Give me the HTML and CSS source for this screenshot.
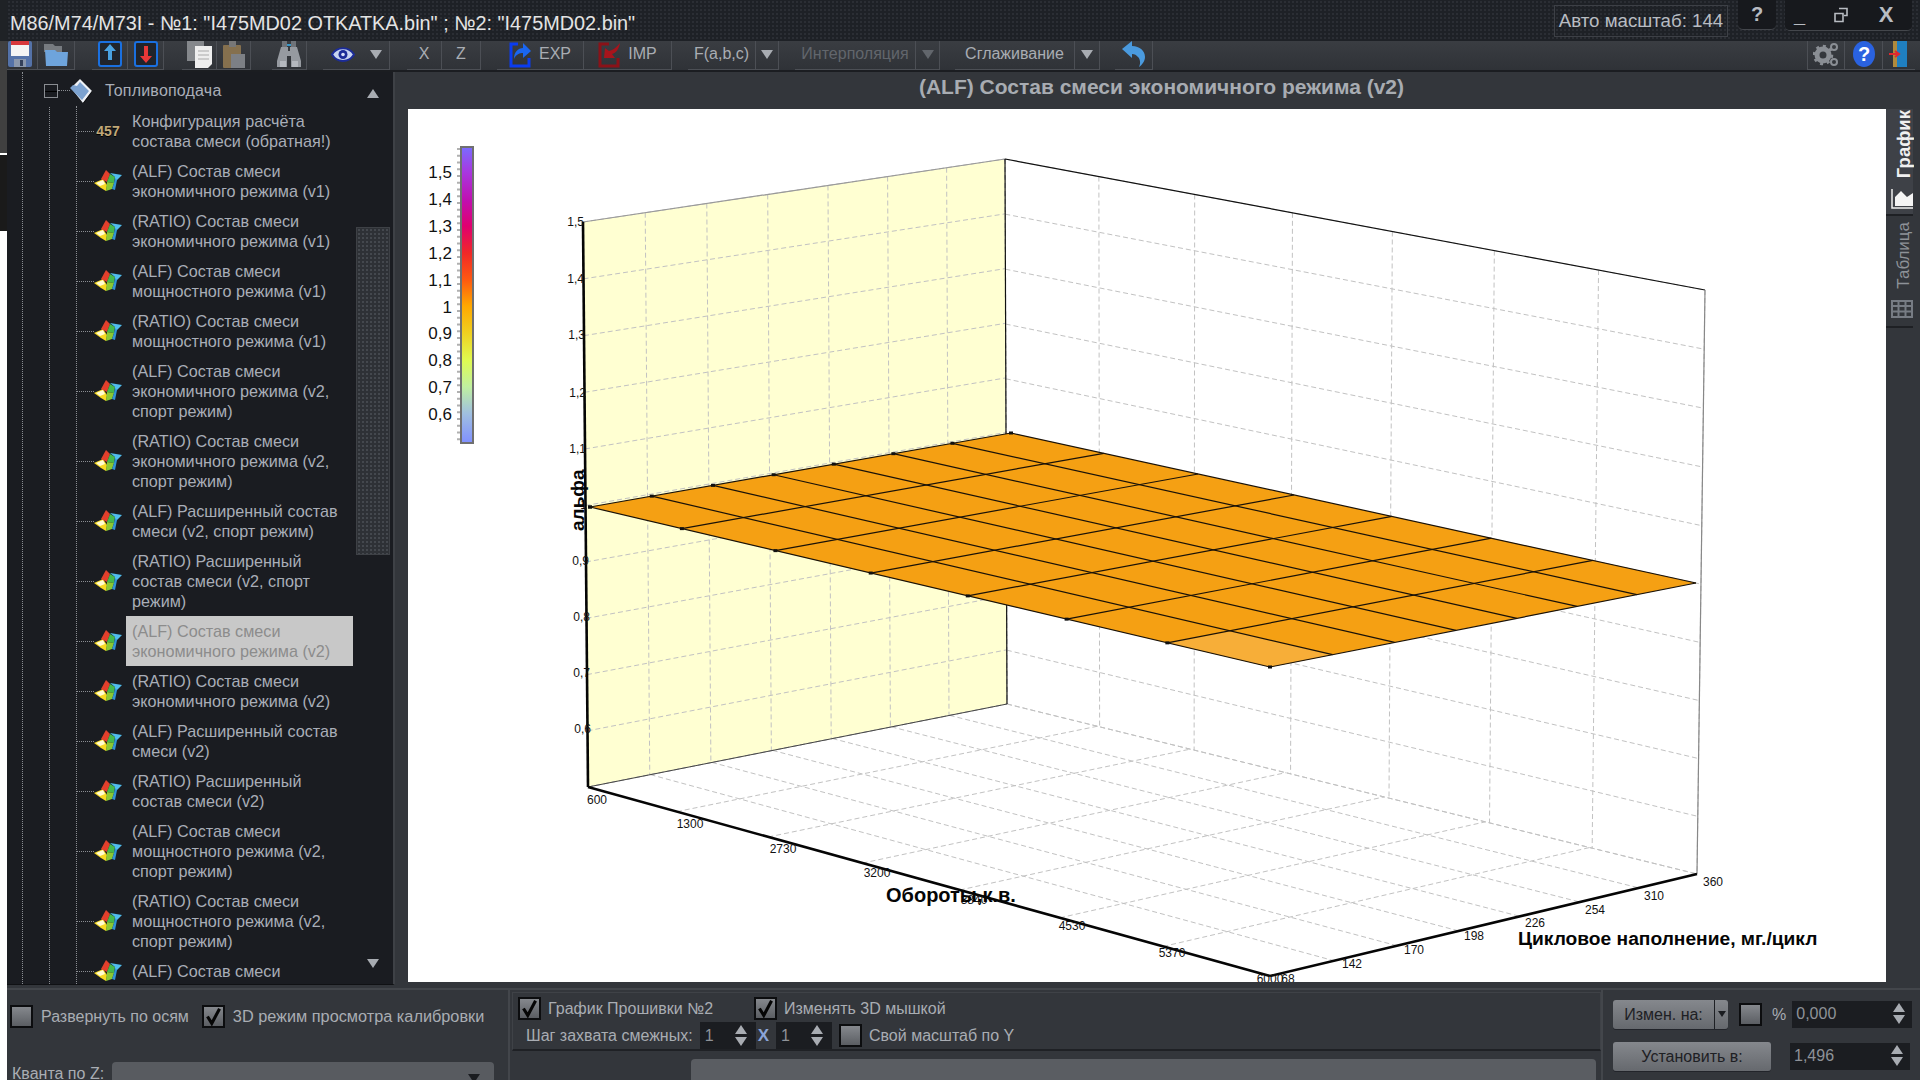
FILE: index.html
```html
<!DOCTYPE html>
<html lang="ru">
<head>
    <meta charset="UTF-8">
    <title>M86/M74/M73I</title>
    <link rel="stylesheet" href="styles.css">
</head>
<body>
    <svg class="defs" width="0" height="0">
        <symbol id="ic-map" viewBox="0 0 28 22">
            <polygon points="0,14 9,10 13,16 12,22 7,19" fill="#f6d820"/>
            <polygon points="2,14 9,11 11,15 6,17" fill="#fffbd0"/>
            <polygon points="7,10 12,1 16,5 13,13 9,11" fill="#e2402c"/>
            <polygon points="13,13 16,5 21,8 20,14" fill="#46b84c"/>
            <polygon points="12,22 13,13 20,14 18,20" fill="#8cc832"/>
            <polygon points="16,4 28,6 21,13 21,8" fill="#50bcec"/>
            <polygon points="20,14 21,9 23,11 21,21 18,20" fill="#2f94d4"/>
        </symbol>
        <symbol id="ic-check" viewBox="0 0 22 22">
            <path d="M4 11 L9 19 L18 2" fill="none" stroke="#050505" stroke-width="3.6"/>
        </symbol>
    </svg>

    <div class="window">
        <div class="titlebar">
            <div class="title-text">M86/M74/M73I - №1: "I475MD02 OTKATKA.bin" ; №2: "I475MD02.bin"</div>
            <div class="auto-scale">Авто масштаб: 144</div>
            <div class="win-btn win-help">?</div>
            <div class="win-group">
                <div class="win-btn win-min">_</div>
                <div class="win-btn win-max">
                    <svg width="14" height="16" viewBox="0 0 14 16"><path d="M5 1.5h8v7h-3M1 6.5h8v8H1z" fill="none" stroke="#b8bcc2" stroke-width="1.6"/></svg>
                </div>
                <div class="win-btn win-close">X</div>
            </div>
        </div>

        <div class="toolbar">
            <div class="tb-btn w31 tb-save">
                <svg width="24" height="26" viewBox="0 0 24 26"><rect width="24" height="26" rx="2" fill="#5472a8"/><rect x="3" y="0" width="18" height="15" fill="#f4f4f4"/><rect x="3" y="0" width="18" height="4" fill="#d8383c"/><rect x="6" y="18" width="12" height="8" fill="#8a97ac"/><rect x="12" y="19" width="3" height="6" fill="#33405a"/></svg>
            </div>
            <div class="tb-btn w37">
                <svg width="25" height="24" viewBox="0 0 25 24"><path d="M0 2h9l2 2h7v6H0z" fill="#777b80"/><path d="M1 8h10l2 2h11l-1 14H2z" fill="#6ea4dc"/></svg>
            </div>
            <div class="tb-btn w36 gap17">
                <svg width="24" height="26" viewBox="0 0 24 26"><rect x="1" y="1" width="22" height="24" rx="2" fill="#20242b" stroke="#1a70e0" stroke-width="2"/><path d="M12 3l6 7h-4v9h-4v-9H6z" fill="#4aa2e0"/></svg>
            </div>
            <div class="tb-btn w36">
                <svg width="24" height="26" viewBox="0 0 24 26"><rect x="1" y="1" width="22" height="24" rx="2" fill="#20242b" stroke="#1a70e0" stroke-width="2"/><path d="M12 22l-6-7h4V5h4v10h4z" fill="#e83838"/></svg>
            </div>
            <div class="tb-btn w35 gap18">
                <svg width="25" height="27" viewBox="0 0 25 27"><rect width="17" height="20" fill="#85888c"/><path d="M8 5h17v18l-4 4H8z" fill="#eeeeee"/><path d="M11 10h11M11 14h11M11 18h11" stroke="#aaa"/></svg>
            </div>
            <div class="tb-btn w34">
                <svg width="22" height="27" viewBox="0 0 22 27"><rect y="4" width="18" height="23" rx="1" fill="#85704e"/><rect x="6" width="7" height="6" fill="#777"/><rect x="8" y="13" width="14" height="14" fill="#7d8085"/></svg>
            </div>
            <div class="tb-btn w35 gap21">
                <svg width="26" height="27" viewBox="0 0 26 27"><path d="M6 0h5v6H6zM15 0h5v6h-5z" fill="#6f7379"/><path d="M5 6h7v4h2V6h7l4 14v6H15V15h-4v11H1v-6z" fill="#969aa0"/><path d="M4 20h6v6H4zM16 20h6v6h-6z" fill="#b4b8be"/><rect x="11" y="3" width="4" height="2" fill="#3a98c8"/></svg>
            </div>
            <div class="tb-btn w67 gap16">
                <svg width="24" height="17" viewBox="0 0 24 17"><path d="M1 8.5C6 0 18 0 23 8.5 18 17 6 17 1 8.5z" fill="#c8d4f0" stroke="#1c2c98" stroke-width="2"/><circle cx="12" cy="8.5" r="4.5" fill="#1c2c98"/><circle cx="12" cy="8.5" r="1.8" fill="#d8e0f8"/></svg>
                <span class="tri tri-down"></span>
            </div>
            <div class="tb-btn w35 gap17">X</div>
            <div class="tb-btn w39">Z</div>
            <div class="tb-btn w87 gap16 tb-icon-text">
                <svg width="23" height="28" viewBox="0 0 23 28"><path d="M9 4H2v22h18v-8" fill="none" stroke="#0a3cf0" stroke-width="3"/><path d="M5 19c0-7 4-11 9-11V3l8 8-8 7v-5c-3 0-7 1-9 6z" fill="#1a66f0"/></svg>
                <span>EXP</span>
            </div>
            <div class="tb-btn w88 tb-icon-text">
                <svg width="23" height="28" viewBox="0 0 23 28"><path d="M11 4H2v22h18v-8" fill="none" stroke="#8a1218" stroke-width="3"/><path d="M22 3c-1 6-4 10-8 11l3 4H6l1-10 4 3c4-1 8-4 11-8z" fill="#a8141c"/></svg>
                <span>IMP</span>
            </div>
            <div class="tb-btn w68 gap16">F(a,b,c)</div>
            <div class="tb-btn w23"><span class="tri tri-down"></span></div>
            <div class="tb-btn w121 gap16 disabled">Интерполяция</div>
            <div class="tb-btn w24 disabled"><span class="tri tri-down dim"></span></div>
            <div class="tb-btn w120 gap15">Сглаживание</div>
            <div class="tb-btn w25"><span class="tri tri-down"></span></div>
            <div class="tb-btn w38 gap15">
                <svg width="26" height="28" viewBox="0 0 26 28"><path d="M1 9l10-8v5c8 0 13 5 13 11 0 4-3 8-6 10 2-4 1-8-1-10-2-2-3-3-6-3v4z" fill="#4a9ade"/></svg>
            </div>
            <div class="tb-spacer"></div>
            <div class="tb-btn tb-end w37">
                <svg width="26" height="26" viewBox="0 0 26 26"><circle cx="10" cy="14" r="6" fill="none" stroke="#8a8e94" stroke-width="5"/><circle cx="10" cy="14" r="9" fill="none" stroke="#8a8e94" stroke-width="2.5" stroke-dasharray="3 4"/><circle cx="21" cy="6" r="3" fill="none" stroke="#8a8e94" stroke-width="2"/><circle cx="21" cy="21" r="3" fill="none" stroke="#8a8e94" stroke-width="2"/></svg>
            </div>
            <div class="tb-btn tb-end w38">
                <svg width="24" height="28" viewBox="0 0 24 28"><ellipse cx="12" cy="14" rx="11" ry="13" fill="#2a62e0"/><text x="12" y="21" text-anchor="middle" class="help-mark">?</text></svg>
            </div>
            <div class="tb-btn tb-end w33">
                <svg width="20" height="28" viewBox="0 0 20 28"><rect x="4" y="1" width="14" height="26" fill="#b08a3c"/><rect x="8" y="1" width="10" height="26" fill="#1f7fc0"/><path d="M0 14h9M6 11l4 3-4 3" stroke="#e02830" stroke-width="2" fill="none"/></svg>
            </div>
        </div>

        <div class="main">
            <div class="sidebar">
                <div class="tree">
                    <div class="level">
                        <div class="level">
                            <div class="tree-head">
                                <span class="expander"></span>
                                <span class="head-dots"></span>
                                <svg width="22" height="24" viewBox="0 0 22 24"><path d="M1 9L10 0l12 12-9 12z" fill="#eef1f6"/><path d="M0 9l3-3 4 1 3-4 9 9-7 9z" fill="#7ca2d0"/><path d="M22 12l-9 12 1 0 8-11z" fill="#0b0c0e"/></svg>
                                <span class="head-text">Топливоподача</span>
                            </div>
                            <div class="children">
                                <div class="row"><span class="dots"></span><span class="num-icon">457</span><div class="row-text">Конфигурация расчёта<br>состава смеси (обратная!)</div></div>
                                <div class="row"><span class="dots"></span><svg class="map"><use href="#ic-map"/></svg><div class="row-text">(ALF) Состав смеси<br>экономичного режима (v1)</div></div>
                                <div class="row"><span class="dots"></span><svg class="map"><use href="#ic-map"/></svg><div class="row-text">(RATIO) Состав смеси<br>экономичного режима (v1)</div></div>
                                <div class="row"><span class="dots"></span><svg class="map"><use href="#ic-map"/></svg><div class="row-text">(ALF) Состав смеси<br>мощностного режима (v1)</div></div>
                                <div class="row"><span class="dots"></span><svg class="map"><use href="#ic-map"/></svg><div class="row-text">(RATIO) Состав смеси<br>мощностного режима (v1)</div></div>
                                <div class="row"><span class="dots"></span><svg class="map"><use href="#ic-map"/></svg><div class="row-text">(ALF) Состав смеси<br>экономичного режима (v2,<br>спорт режим)</div></div>
                                <div class="row"><span class="dots"></span><svg class="map"><use href="#ic-map"/></svg><div class="row-text">(RATIO) Состав смеси<br>экономичного режима (v2,<br>спорт режим)</div></div>
                                <div class="row"><span class="dots"></span><svg class="map"><use href="#ic-map"/></svg><div class="row-text">(ALF) Расширенный состав<br>смеси (v2, спорт режим)</div></div>
                                <div class="row"><span class="dots"></span><svg class="map"><use href="#ic-map"/></svg><div class="row-text">(RATIO) Расширенный<br>состав смеси (v2, спорт<br>режим)</div></div>
                                <div class="row"><span class="dots"></span><svg class="map"><use href="#ic-map"/></svg><div class="row-text selected">(ALF) Состав смеси<br>экономичного режима (v2)</div></div>
                                <div class="row"><span class="dots"></span><svg class="map"><use href="#ic-map"/></svg><div class="row-text">(RATIO) Состав смеси<br>экономичного режима (v2)</div></div>
                                <div class="row"><span class="dots"></span><svg class="map"><use href="#ic-map"/></svg><div class="row-text">(ALF) Расширенный состав<br>смеси (v2)</div></div>
                                <div class="row"><span class="dots"></span><svg class="map"><use href="#ic-map"/></svg><div class="row-text">(RATIO) Расширенный<br>состав смеси (v2)</div></div>
                                <div class="row"><span class="dots"></span><svg class="map"><use href="#ic-map"/></svg><div class="row-text">(ALF) Состав смеси<br>мощностного режима (v2,<br>спорт режим)</div></div>
                                <div class="row"><span class="dots"></span><svg class="map"><use href="#ic-map"/></svg><div class="row-text">(RATIO) Состав смеси<br>мощностного режима (v2,<br>спорт режим)</div></div>
                                <div class="row"><span class="dots"></span><svg class="map"><use href="#ic-map"/></svg><div class="row-text">(ALF) Состав смеси</div></div>
                            </div>
                        </div>
                    </div>
                </div>
                <div class="scroll">
                    <span class="tri tri-up scroll-up"></span>
                    <div class="scroll-thumb"></div>
                    <span class="tri tri-down scroll-down"></span>
                </div>
            </div>

            <div class="content">
                <div class="chart-title">(ALF) Состав смеси экономичного режима (v2)</div>
                <div class="chart-row">
                    <div class="chart">
                        <svg id="plot" width="1478" height="873" viewBox="408 109 1478 873">
                            <defs>
                                <linearGradient id="legend-grad" x1="0" y1="0" x2="0" y2="1">
                                    <stop offset="0" stop-color="#7a6cff"/>
                                    <stop offset="0.084" stop-color="#a838e0"/>
                                    <stop offset="0.18" stop-color="#c010b0"/>
                                    <stop offset="0.267" stop-color="#e00070"/>
                                    <stop offset="0.358" stop-color="#f02828"/>
                                    <stop offset="0.45" stop-color="#ff5a10"/>
                                    <stop offset="0.537" stop-color="#ffa800"/>
                                    <stop offset="0.628" stop-color="#f0d020"/>
                                    <stop offset="0.72" stop-color="#e0fa50"/>
                                    <stop offset="0.81" stop-color="#c0f0a0"/>
                                    <stop offset="0.9" stop-color="#a0c0e0"/>
                                    <stop offset="1" stop-color="#8090ff"/>
                                </linearGradient>
                            </defs>

                            <g id="layer-grid"></g>
                            <g id="layer-plane"></g>

                            <rect x="461" y="147" width="12" height="296" fill="url(#legend-grad)" stroke="#707070" stroke-width="2"/>
                            <line x1="458.5" y1="148" x2="458.5" y2="443" stroke="#b0b0b0" stroke-width="3" stroke-dasharray="2 4.75"/>
                            <g class="legend-labels">
                                <text x="452" y="178">1,5</text>
                                <text x="452" y="205">1,4</text>
                                <text x="452" y="232">1,3</text>
                                <text x="452" y="259">1,2</text>
                                <text x="452" y="286">1,1</text>
                                <text x="452" y="313">1</text>
                                <text x="452" y="339">0,9</text>
                                <text x="452" y="366">0,8</text>
                                <text x="452" y="393">0,7</text>
                                <text x="452" y="420">0,6</text>
                            </g>

                            <g class="axis-y">
                                <text x="584" y="226">1,5</text>
                                <text x="584" y="283">1,4</text>
                                <text x="585" y="339">1,3</text>
                                <text x="586" y="397">1,2</text>
                                <text x="586" y="453">1,1</text>
                                <text x="587" y="509">1</text>
                                <text x="589" y="565">0,9</text>
                                <text x="590" y="621">0,8</text>
                                <text x="590" y="677">0,7</text>
                                <text x="591" y="733">0,6</text>
                            </g>

                            <g class="axis-x">
                                <text x="597" y="804">600</text>
                                <text x="690" y="828">1300</text>
                                <text x="783" y="853">2730</text>
                                <text x="877" y="877">3200</text>
                                <text x="974" y="904">3840</text>
                                <text x="1072" y="930">4530</text>
                                <text x="1172" y="957">5370</text>
                                <text x="1270" y="983">6000</text>
                                <text x="1288" y="983">68</text>
                                <text x="1352" y="968">142</text>
                                <text x="1414" y="954">170</text>
                                <text x="1474" y="940">198</text>
                                <text x="1535" y="927">226</text>
                                <text x="1595" y="914">254</text>
                                <text x="1654" y="900">310</text>
                                <text x="1713" y="886">360</text>
                            </g>

                            <g class="axis-title">
                                <text class="title-rpm" x="886" y="902">Обороты,к.в.</text>
                                <text class="title-fill" x="1518" y="945">Цикловое наполнение, мг./цикл</text>
                                <text class="title-alpha" transform="translate(584 531) rotate(-90)">альфа</text>
                            </g>
                        </svg>
                    </div>
                    <div class="side-tabs">
                        <div class="side-tab active">
                            <span class="side-label">График</span>
                            <svg width="22" height="20" viewBox="0 0 22 20"><path d="M1 0v19h21" fill="none" stroke="#f0f0f0" stroke-width="1.5"/><path d="M4 17V8l6-6 6 6 6-4v13z" fill="#f4f4f4"/></svg>
                        </div>
                        <div class="side-tab">
                            <span class="side-label">Таблица</span>
                            <svg width="22" height="18" viewBox="0 0 22 18"><path d="M1 1h20v16H1zM1 6h20M1 11.5h20M7.5 1v16M14.5 1v16" fill="none" stroke="#777c84" stroke-width="2"/></svg>
                        </div>
                    </div>
                </div>
            </div>
        </div>

        <div class="bottom">
            <div class="panel-left">
                <div class="opt-row">
                    <span class="check"></span>
                    <span class="opt-label">Развернуть по осям</span>
                    <span class="check on gap-check"><svg><use href="#ic-check"/></svg></span>
                    <span class="opt-label wide">3D режим просмотра калибровки</span>
                </div>
                <div class="quant-row">
                    <span class="opt-label">Кванта по Z:</span>
                    <div class="combo"><span class="tri tri-down dark"></span></div>
                </div>
            </div>

            <div class="panel-mid">
                <div class="mid-box">
                    <div class="mid-row">
                        <span class="check on"><svg><use href="#ic-check"/></svg></span>
                        <span class="opt-label w-graph">График Прошивки №2</span>
                        <span class="check on"><svg><use href="#ic-check"/></svg></span>
                        <span class="opt-label">Изменять 3D мышкой</span>
                    </div>
                    <div class="mid-row mid-row2">
                        <span class="opt-label">Шаг захвата смежных:</span>
                        <div class="spin s56"><span>1</span><span class="arrows"><i class="tri tri-up"></i><i class="tri tri-down"></i></span></div>
                        <span class="cross">X</span>
                        <div class="spin s56"><span>1</span><span class="arrows"><i class="tri tri-up"></i><i class="tri tri-down"></i></span></div>
                        <span class="check"></span>
                        <span class="opt-label">Свой масштаб по Y</span>
                    </div>
                </div>
                <div class="mid-track"><div class="track-thumb"></div></div>
            </div>

            <div class="panel-right">
                <div class="right-row">
                    <div class="btn btn-drop"><span class="btn-text">Измен. на:</span><span class="drop-part"><i class="tri tri-down dark small"></i></span></div>
                    <span class="check"></span>
                    <span class="opt-label pct">%</span>
                    <div class="spin s120"><span>0,000</span><span class="arrows"><i class="tri tri-up"></i><i class="tri tri-down"></i></span></div>
                </div>
                <div class="right-row">
                    <div class="btn btn-set">Установить в:</div>
                    <div class="spin s120"><span>1,496</span><span class="arrows"><i class="tri tri-up"></i><i class="tri tri-down"></i></span></div>
                </div>
            </div>
        </div>
    </div>

    <script src="chart.js"></script>
</body>
</html>
```

FILE: styles.css
```css
* {
    box-sizing: border-box;
}
body {
    margin: 0;
    width: 1920px;
    height: 1080px;
    overflow: hidden;
    font-family: "Liberation Sans", Arial, sans-serif;
    font-size: 16px;
    color: #a9adb3;
    /* desktop showing through at the left of the window */
    background: linear-gradient(to bottom, #1f2226 0 41px, #404040 41px 153px, #ffffff 153px 155px, #1a1a1a 155px 231px, #ffffff 231px);
}
.defs {
    position: absolute;
}
.window {
    margin-left: 7px;
    width: 1913px;
    height: 1080px;
    display: flex;
    flex-direction: column;
    background-color: #33363b;
}

/* title bar */
.titlebar {
    height: 41px;
    display: flex;
    align-items: flex-start;
    padding-right: 8px;
    background-color: #1e2126;
    background-image: radial-gradient(#2b2e34 1px, transparent 1.2px);
    background-size: 4px 4px;
}
.title-text {
    margin: 11px 0 0 3px;
    font-size: 19.85px;
    line-height: 24px;
    color: #e4e4e4;
    white-space: nowrap;
}
.auto-scale {
    margin: 5px 0 0 auto;
    width: 174px;
    height: 32px;
    line-height: 30px;
    text-align: center;
    font-size: 18.7px;
    color: #b8bcc2;
    border: 1px solid #3d4046;
}
.win-btn {
    display: flex;
    align-items: center;
    justify-content: center;
    height: 30px;
    font-size: 20px;
    font-weight: bold;
    color: #b8bcc2;
    background-color: #17191d;
}
.win-help {
    margin-left: 10px;
    width: 38px;
    border-radius: 0 0 5px 5px;
    border-bottom: 1px solid #44474c;
}
.win-group {
    display: flex;
    margin-left: 9px;
    border-bottom: 1px solid #44474c;
    border-radius: 0 0 5px 5px;
    overflow: hidden;
}
.win-min {
    width: 37px;
    padding-right: 8px;
}
.win-max {
    width: 38px;
}
.win-close {
    width: 52px;
    font-size: 22px;
}

/* toolbar */
.toolbar {
    height: 31px;
    display: flex;
    padding-right: 5px;
    background: linear-gradient(#3a3d42, #2f3237);
    border-bottom: 2px solid #1b1d21;
}
.tb-btn {
    display: flex;
    align-items: center;
    justify-content: center;
    flex-shrink: 0;
    height: 29px;
    padding-bottom: 2px;
    font-size: 16px;
    color: #a9adb3;
    border-right: 1px solid #4c4f55;
    border-bottom: 1px solid #4c4f55;
    white-space: nowrap;
}
.tb-btn svg {
    flex-shrink: 0;
}
.tb-btn.disabled {
    color: #62666c;
}
.tb-save {
    padding-right: 5px;
}
.tb-icon-text {
    gap: 7px;
}
.tb-end {
    border-left: 1px solid #4c4f55;
    border-right: 0;
}
.tb-spacer {
    flex: 1;
}
.help-mark {
    font-size: 20px;
    font-weight: bold;
    fill: #ffffff;
}
.w23 { width: 23px; }
.w24 { width: 24px; }
.w25 { width: 25px; }
.w31 { width: 31px; }
.w33 { width: 33px; }
.w34 { width: 34px; }
.w35 { width: 35px; }
.w36 { width: 36px; }
.w37 { width: 37px; }
.w38 { width: 38px; }
.w39 { width: 39px; }
.w67 { width: 67px; gap: 15px; }
.w68 { width: 68px; }
.w87 { width: 87px; }
.w88 { width: 88px; }
.w120 { width: 120px; }
.w121 { width: 121px; }
.gap15 { margin-left: 15px; }
.gap16 { margin-left: 16px; }
.gap17 { margin-left: 17px; }
.gap18 { margin-left: 18px; }
.gap21 { margin-left: 21px; }

/* triangles */
.tri {
    display: inline-block;
    width: 0;
    height: 0;
    border-left: 6px solid transparent;
    border-right: 6px solid transparent;
}
.tri-down {
    border-top: 9px solid #a8acb2;
}
.tri-up {
    border-bottom: 9px solid #a8acb2;
}
.tri-down.dim {
    border-top-color: #62666c;
}
.tri-down.dark {
    border-top-color: #1a1c20;
}
.tri-down.small {
    border-left-width: 4px;
    border-right-width: 4px;
    border-top-width: 6px;
}

/* main area */
.main {
    height: 916px;
    display: flex;
}
.sidebar {
    width: 388px;
    height: 913px;
    display: flex;
    background-color: #1a1c21;
    border-right: 2px solid #3e4146;
    border-bottom: 1px solid #101114;
}
.tree {
    width: 346px;
    overflow: hidden;
    color: #a9aeb8;
}
.level {
    margin-left: 15px;
    padding-left: 26px;
    border-left: 1px dotted #8a8d92;
}
.level .level {
    margin-left: 0;
}
.tree-head {
    height: 34px;
    padding-top: 3px;
    margin-left: -32px;
    display: flex;
    align-items: center;
    background-color: #1a1c21;
}
.expander {
    width: 14px;
    height: 14px;
    border: 1px solid #8a8d92;
    background: linear-gradient(#1a1c21 6px, #000 6px 7px, #1a1c21 7px);
}
.head-dots {
    width: 12px;
    border-top: 1px dotted #8a8d92;
}
.head-text {
    margin-left: 13px;
    font-size: 16px;
    letter-spacing: 0.2px;
}
.children {
    border-left: 1px dotted #8a8d92;
}
.row {
    display: flex;
    align-items: center;
    font-size: 16.2px;
    line-height: 20px;
}
.dots {
    width: 17px;
    flex-shrink: 0;
    border-top: 1px dotted #8a8d92;
}
.map {
    width: 28px;
    height: 22px;
    margin-top: -2px;
    flex-shrink: 0;
}
.num-icon {
    width: 28px;
    flex-shrink: 0;
    text-align: center;
    font-size: 14px;
    font-weight: bold;
    color: #c2a878;
    text-shadow: 0 1px 0 #000;
}
.row-text {
    flex: 1;
    margin-left: 4px;
    padding: 5px 6px;
    white-space: nowrap;
}
.row-text.selected {
    background-color: #c8c8c8;
    color: #8c8c8c;
}
.scroll {
    width: 40px;
    display: flex;
    flex-direction: column;
    align-items: center;
}
.scroll-up {
    margin-top: 17px;
}
.scroll-thumb {
    width: 34px;
    height: 328px;
    margin-top: 129px;
    background-color: #2e3136;
    background-image: radial-gradient(#44484e 1px, transparent 1.2px);
    background-size: 4px 4px;
    border: 1px solid #3e4146;
}
.scroll-down {
    margin-top: auto;
    margin-bottom: 16px;
}

.content {
    flex: 1;
    display: flex;
    flex-direction: column;
}
.chart-title {
    height: 37px;
    line-height: 29px;
    padding-left: 8px;
    text-align: center;
    font-size: 21px;
    font-weight: bold;
    color: #a8acb2;
}
.chart-row {
    flex: 1;
    display: flex;
    padding-left: 13px;
}
.chart {
    width: 1478px;
    height: 873px;
    background-color: #ffffff;
}
#plot {
    display: block;
}
.legend-labels text {
    font-size: 17px;
    text-anchor: end;
    fill: #111111;
}
.axis-y text {
    font-size: 12px;
    text-anchor: end;
    fill: #111111;
}
.axis-x text {
    font-size: 12px;
    text-anchor: middle;
    fill: #111111;
}
.axis-title text {
    font-weight: bold;
    fill: #050505;
}
.axis-title .title-rpm {
    font-size: 20px;
}
.axis-title .title-fill {
    font-size: 19.2px;
}
.axis-title .title-alpha {
    font-size: 19px;
}
.side-tabs {
    width: 27px;
}
.side-tab {
    display: flex;
    flex-direction: column;
    align-items: flex-end;
    gap: 11px;
    height: 107px;
    padding-top: 1px;
    background-color: #3e4147;
    border-bottom: 2px solid #1e2024;
}
.side-tab + .side-tab {
    height: 112px;
    padding-top: 6px;
    gap: 11px;
    background-color: #33363b;
}
.side-label {
    writing-mode: vertical-rl;
    transform: rotate(180deg);
    font-size: 17px;
    line-height: 22px;
    width: 22px;
    margin-right: -2px;
    color: #8e9298;
}
.side-tab.active .side-label {
    font-size: 18.5px;
    font-weight: bold;
    color: #f0f0f0;
}

/* bottom panels */
.bottom {
    flex: 1;
    display: flex;
    overflow: hidden;
    border-top: 2px solid #43464b;
}
.check {
    display: inline-block;
    flex-shrink: 0;
    width: 23px;
    height: 23px;
    border: 2px solid #0c0d0f;
    background: linear-gradient(#85888d, #5b5e63);
}
.check svg {
    display: block;
    width: 19px;
    height: 19px;
}
.opt-label {
    white-space: nowrap;
    font-size: 16px;
}
.opt-label.wide {
    font-size: 16.3px;
}
.panel-left {
    width: 503px;
    flex-shrink: 0;
    padding: 15px 0 0 3px;
    border-right: 2px solid #43464b;
}
.opt-row {
    display: flex;
    align-items: center;
    gap: 8px;
}
.gap-check {
    margin-left: 5px;
}
.quant-row {
    display: flex;
    margin-top: 34px;
    margin-left: 2px;
    align-items: flex-start;
    gap: 8px;
}
.quant-row .opt-label {
    line-height: 24px;
}
.combo {
    width: 382px;
    height: 40px;
    padding: 7px 0 0 356px;
    background-color: #585b60;
    border-radius: 4px 4px 0 0;
}
.panel-mid {
    width: 1093px;
    flex-shrink: 0;
    padding: 2px 0 0 2px;
    display: flex;
    flex-direction: column;
    border-right: 2px solid #43464b;
}
.mid-box {
    height: 68px;
    padding: 4px 0 0 5px;
    border: 1px solid #3f4247;
    border-bottom: 2px solid #1f2125;
}
.mid-row {
    display: flex;
    align-items: center;
    gap: 7px;
}
.w-graph {
    width: 199px;
}
.mid-row2 {
    margin: 2px 0 0 8px;
    gap: 7px;
}
.spin {
    display: flex;
    align-items: center;
    justify-content: space-between;
    height: 27px;
    padding: 0 5px;
    font-size: 16px;
    color: #8e9298;
    background-color: #1b1d21;
}
.s56 {
    width: 56px;
    padding-right: 9px;
}
.s120 {
    width: 120px;
    padding: 0 7px 2px 4px;
}
.arrows {
    display: flex;
    flex-direction: column;
    gap: 3px;
}
.cross {
    margin: 0 0 0 -5px;
    font-weight: bold;
    font-size: 17px;
    color: #8aa4d8;
}
.mid-track {
    flex: 1;
    padding: 8px 0 0 179px;
}
.track-thumb {
    width: 905px;
    height: 30px;
    background-color: #5a5d62;
    border-radius: 4px 4px 0 0;
}
.panel-right {
    flex: 1;
    padding: 10px 0 0 10px;
}
.right-row {
    display: flex;
    align-items: center;
    gap: 11px;
    height: 29px;
    margin-bottom: 13px;
}
.btn {
    display: flex;
    align-items: center;
    justify-content: center;
    height: 29px;
    color: #1e2024;
    background: linear-gradient(#85888d, #66696e);
    border-radius: 3px;
    font-size: 16px;
    box-shadow: 0 1px 0 #22242a;
}
.btn-drop {
    width: 115px;
}
.btn-text {
    flex: 1;
    text-align: center;
}
.drop-part {
    width: 14px;
    height: 29px;
    padding-top: 11px;
    text-align: center;
    line-height: 0;
    border-left: 1px solid #1e2024;
}
.btn-set {
    width: 158px;
    margin-right: 8px;
}
.pct {
    margin-left: -1px;
    margin-right: -5px;
}
```

FILE: chart.js
```js
// plot faces as screen-space quads: top-left, top-right, bottom-right, bottom-left
const leftWall = [[583, 222], [1005, 159], [1007, 704], [588, 787]];
const rightWall = [[1005, 159], [1705, 290], [1697, 874], [1007, 704]];
const floorFace = [[588, 787], [1007, 704], [1697, 874], [1270, 976]];
const plane = [[590, 507], [1011, 433], [1696, 583], [1270, 667]];

const NS = 'http://www.w3.org/2000/svg';

function el(parent, tag, attrs) {
    const node = document.createElementNS(NS, tag);
    for (const key in attrs) node.setAttribute(key, attrs[key]);
    parent.appendChild(node);
    return node;
}

// unit square -> quad projective map, so the grids keep the perspective
function projector(q) {
    const [[x0, y0], [x1, y1], [x2, y2], [x3, y3]] = q;
    const dx1 = x1 - x2, dx2 = x3 - x2, sx = x0 - x1 + x2 - x3;
    const dy1 = y1 - y2, dy2 = y3 - y2, sy = y0 - y1 + y2 - y3;
    const den = dx1 * dy2 - dx2 * dy1;
    const g = (sx * dy2 - dx2 * sy) / den;
    const h = (dx1 * sy - sx * dy1) / den;
    const a = x1 - x0 + g * x1, b = x3 - x0 + h * x3;
    const d = y1 - y0 + g * y1, e = y3 - y0 + h * y3;
    return (u, v) => {
        const w = g * u + h * v + 1;
        return [(a * u + b * v + x0) / w, (d * u + e * v + y0) / w];
    };
}

function quad(parent, q, attrs) {
    return el(parent, 'polygon', Object.assign({ points: q.map(p => p.join(',')).join(' ') }, attrs));
}

function seg(parent, a, b, attrs) {
    return el(parent, 'line', Object.assign({ x1: a[0], y1: a[1], x2: b[0], y2: b[1] }, attrs));
}

function gridLines(parent, q, cols, rows, attrs) {
    const at = projector(q);
    for (let i = 0; i <= cols; i++) seg(parent, at(i / cols, 0), at(i / cols, 1), attrs);
    for (let j = 0; j <= rows; j++) seg(parent, at(0, j / rows), at(1, j / rows), attrs);
}

const grid = document.getElementById('layer-grid');
const planeLayer = document.getElementById('layer-plane');
const dashed = { stroke: '#c2c2c2', 'stroke-width': 1, 'stroke-dasharray': '5 3' };

quad(grid, leftWall, { fill: '#ffffd2' });
gridLines(grid, leftWall, 7, 10, dashed);
gridLines(grid, rightWall, 7, 10, dashed);
gridLines(grid, floorFace, 7, 7, dashed);

seg(grid, leftWall[0], leftWall[1], { stroke: '#999', 'stroke-width': 1.2 });
seg(grid, rightWall[0], rightWall[1], { stroke: '#111', 'stroke-width': 1.2 });
seg(grid, rightWall[0], rightWall[3], { stroke: '#111', 'stroke-width': 1.2 });
seg(grid, rightWall[1], rightWall[2], { stroke: '#888', 'stroke-width': 1.2 });
seg(grid, floorFace[0], floorFace[1], { stroke: '#444', 'stroke-width': 1 });

// surface, the lighter cell is the one under the cursor
const atPlane = projector(plane);
quad(planeLayer, plane, { fill: '#f5a013' });
quad(planeLayer, [atPlane(0, 6 / 7), atPlane(1 / 7, 6 / 7), atPlane(1 / 7, 1), atPlane(0, 1)], { fill: '#f7ae38' });
gridLines(planeLayer, plane, 7, 7, { stroke: '#1a1208', 'stroke-width': 1.2 });
for (let i = 0; i <= 7; i++) {
    for (const p of [atPlane(i / 7, 0), atPlane(0, i / 7)]) {
        el(planeLayer, 'rect', { x: p[0] - 2, y: p[1] - 1.5, width: 4, height: 3, fill: '#111' });
    }
}

// thick front axes
const axis = { stroke: '#050505', 'stroke-width': 2.6 };
seg(planeLayer, leftWall[0], leftWall[3], axis);
seg(planeLayer, floorFace[0], floorFace[3], axis);
seg(planeLayer, floorFace[3], floorFace[2], axis);
```
